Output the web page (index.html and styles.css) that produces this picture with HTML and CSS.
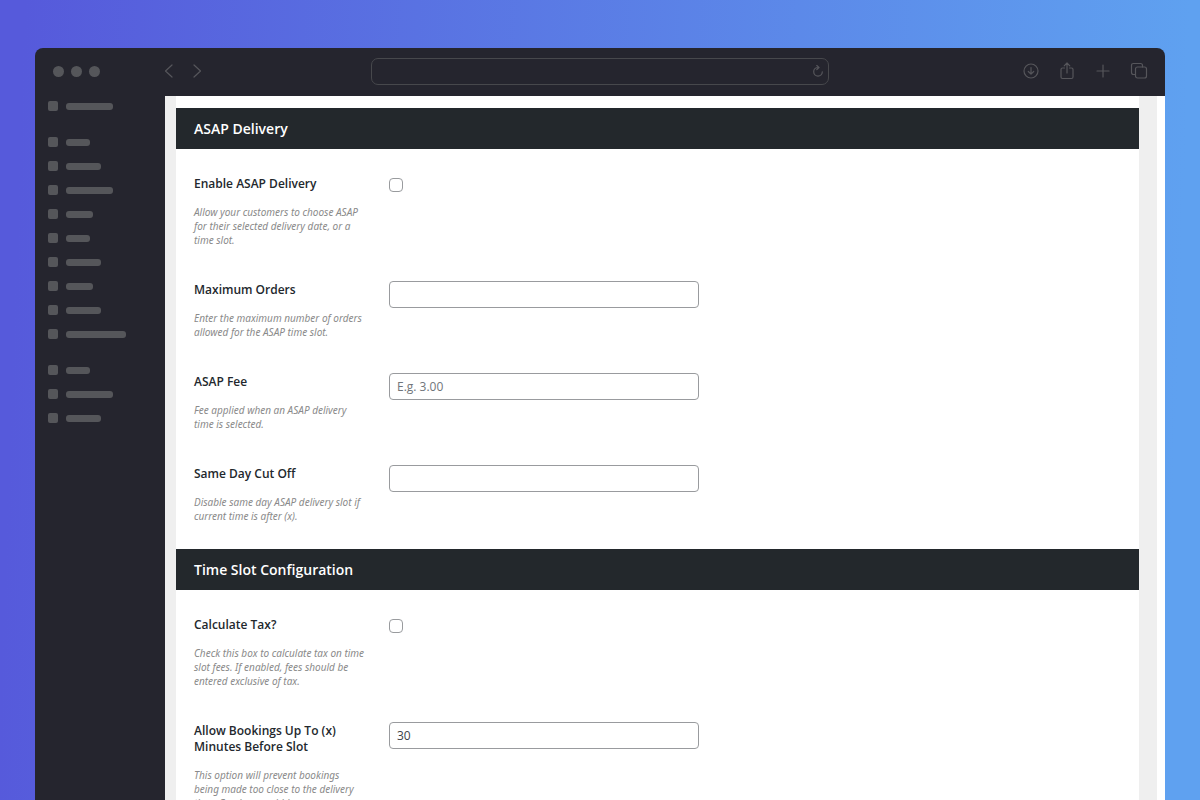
FILE: index.html
```html
<!DOCTYPE html>
<html lang="en">
<head>
<meta charset="UTF-8">
<meta name="viewport" content="width=device-width, initial-scale=1.0">
<title>Delivery Settings</title>
<link rel="stylesheet" href="styles.css">
</head>
<body>
  <div class="window">
    <header class="toolbar">
      <div class="toolbar-left">
        <div class="dots">
          <span></span>
          <span></span>
          <span></span>
        </div>
        <div class="nav-buttons">
          <button type="button" aria-label="Back">
            <svg width="10" height="14" viewBox="0 0 10 14"><path d="M8 1L1.500 7l6.500 6"/></svg>
          </button>
          <button type="button" aria-label="Forward">
            <svg width="10" height="14" viewBox="0 0 10 14"><path d="M2 1l6.500 6L2 13"/></svg>
          </button>
        </div>
      </div>
      <div class="address">
        <input type="text" aria-label="Address">
        <button type="button" aria-label="Reload">
          <svg width="12" height="12" viewBox="0 0 12 12"><path d="M6 2.500A4.300 4.300 0 1 0 10.300 6.800M4.800.500L7 2.500 4.800 4.700"/></svg>
        </button>
      </div>
      <div class="actions">
        <button type="button" aria-label="Downloads">
          <svg width="18" height="18" viewBox="0 0 18 18"><circle cx="9" cy="9" r="7"/><path d="M9 5.500v6.500M6.300 9.500L9 12.200l2.700-2.700"/></svg>
        </button>
        <button type="button" aria-label="Share">
          <svg width="18" height="18" viewBox="0 0 18 18"><path d="M6.500 6H4.500Q3 6 3 7.500v7.500q0 1.500 1.500 1.500h9q1.500 0 1.500-1.500V7.500Q15 6 13.500 6h-2M9 11V1.200M6.200 3.800L9 1l2.800 2.800"/></svg>
        </button>
        <button type="button" aria-label="New tab">
          <svg width="18" height="18" viewBox="0 0 18 18"><path d="M9 3v12M3 9h12"/></svg>
        </button>
        <button type="button" aria-label="Tabs">
          <svg width="18" height="18" viewBox="0 0 18 18"><rect x="5.500" y="5" width="11" height="11" rx="2"/><path d="M5 12.500H3.500q-2 0-2-2v-7q0-2 2-2h7q2 0 2 2V5"/></svg>
        </button>
      </div>
    </header>

    <div class="window-body">
      <aside class="sidebar">
        <ul>
          <li class="w-lg"></li>
        </ul>
        <ul>
          <li class="w-xs"></li>
          <li class="w-md"></li>
          <li class="w-lg"></li>
          <li class="w-sm"></li>
          <li class="w-xs"></li>
          <li class="w-md"></li>
          <li class="w-sm"></li>
          <li class="w-md"></li>
          <li class="w-xl"></li>
        </ul>
        <ul>
          <li class="w-xs"></li>
          <li class="w-lg"></li>
          <li class="w-md"></li>
        </ul>
      </aside>

      <main class="page">
        <form class="settings">
          <section>
            <h2>ASAP Delivery</h2>
            <div class="fields">
              <div class="row">
                <div class="info">
                  <label for="enable-asap">Enable ASAP Delivery</label>
                  <p>Allow your customers to choose ASAP for their selected delivery date, or a time slot.</p>
                </div>
                <div class="control"><input type="checkbox" id="enable-asap"></div>
              </div>
              <div class="row">
                <div class="info">
                  <label for="max-orders">Maximum Orders</label>
                  <p>Enter the maximum number of orders allowed for the ASAP time slot.</p>
                </div>
                <div class="control"><input type="text" id="max-orders"></div>
              </div>
              <div class="row">
                <div class="info">
                  <label for="asap-fee">ASAP Fee</label>
                  <p>Fee applied when an ASAP delivery time is selected.</p>
                </div>
                <div class="control"><input type="text" id="asap-fee" placeholder="E.g. 3.00"></div>
              </div>
              <div class="row">
                <div class="info">
                  <label for="cut-off">Same Day Cut Off</label>
                  <p>Disable same day ASAP delivery slot if current time is after (x).</p>
                </div>
                <div class="control"><input type="text" id="cut-off"></div>
              </div>
            </div>
          </section>

          <section>
            <h2>Time Slot Configuration</h2>
            <div class="fields">
              <div class="row">
                <div class="info">
                  <label for="calc-tax">Calculate Tax?</label>
                  <p>Check this box to calculate tax on time slot fees. If enabled, fees should be entered exclusive of tax.</p>
                </div>
                <div class="control"><input type="checkbox" id="calc-tax"></div>
              </div>
              <div class="row">
                <div class="info">
                  <label for="booking-limit">Allow Bookings Up To (x) Minutes Before Slot</label>
                  <p>This option will prevent bookings being made too close to the delivery time. Can be overridden.</p>
                </div>
                <div class="control"><input type="text" id="booking-limit" value="30"></div>
              </div>
            </div>
          </section>
        </form>
      </main>
    </div>
  </div>
</body>
</html>
```

FILE: styles.css
```css
* {
  box-sizing: border-box;
}
body {
  margin: 0;
  height: 100vh;
  padding: 48px 35px 0;
  overflow: hidden;
  font-family: "Open Sans", "Noto Sans", sans-serif;
  background: linear-gradient(92deg, #565adb 2%, #5fa1f0 97%);
}
button {
  display: flex;
  padding: 0;
  border: none;
  background: none;
  cursor: pointer;
}
svg {
  fill: none;
  stroke: #56565b;
  stroke-width: 1.2;
  stroke-linecap: round;
  stroke-linejoin: round;
}

/* browser window */
.window {
  display: flex;
  flex-direction: column;
  height: 100%;
  border-radius: 8px 8px 0 0;
  overflow: hidden;
  background-color: #25252e;
}
.toolbar {
  display: grid;
  grid-template-columns: 1fr minmax(200px, 458px) 1fr;
  align-items: center;
  height: 48px;
  flex-shrink: 0;
  padding: 0 17px 2px;
}
.toolbar-left {
  display: flex;
  align-items: center;
  gap: 64px;
}
.dots {
  display: flex;
  gap: 7px;
  padding-left: 1px;
}
.dots span {
  width: 11px;
  height: 11px;
  border-radius: 50%;
  background-color: #55565a;
}
.nav-buttons {
  display: flex;
  gap: 18px;
}
.address {
  display: flex;
  align-items: center;
  height: 27px;
  padding-right: 4px;
  border: 1px solid #47484c;
  border-radius: 7px;
}
.address input {
  flex-grow: 1;
  min-width: 0;
  border: none;
  outline: none;
  background: none;
  color: #9a9aa0;
}
.actions {
  display: flex;
  justify-content: flex-end;
  gap: 18px;
}
.window-body {
  display: flex;
  flex-grow: 1;
  min-height: 0;
}

/* sidebar placeholders */
.sidebar {
  width: 130px;
  flex-shrink: 0;
  padding-left: 13px;
}
.sidebar ul {
  display: flex;
  flex-direction: column;
  gap: 4px;
  list-style: none;
  margin: 0 0 16px;
  padding: 0;
}
.sidebar li {
  display: flex;
  align-items: center;
  gap: 8px;
  height: 20px;
}
.sidebar li::before {
  content: "";
  width: 10px;
  height: 10px;
  border-radius: 2px;
  background-color: #55565a;
}
.sidebar li::after {
  content: "";
  height: 7px;
  border-radius: 3px;
  background-color: #55565a;
}
.sidebar .w-xs::after { width: 24px; }
.sidebar .w-sm::after { width: 27px; }
.sidebar .w-md::after { width: 35px; }
.sidebar .w-lg::after { width: 47px; }
.sidebar .w-xl::after { width: 60px; }

/* settings page */
.page {
  flex-grow: 1;
  min-width: 0;
  overflow: hidden;
  padding: 0 18px 0 11px;
  border-right: 8px solid #fff;
  background-color: #efefef;
}
.settings {
  min-height: 100%;
  padding-top: 12px;
  background-color: #fff;
}
.settings h2 {
  margin: 0;
  padding: 0 18px;
  font-size: 14px;
  line-height: 41px;
  font-weight: 600;
  color: #fff;
  background-color: #23282c;
}
.fields {
  display: flex;
  flex-direction: column;
  gap: 34px;
  padding: 26px 18px;
}
.row {
  display: flex;
  gap: 23px;
}
.info {
  width: 172px;
  flex-shrink: 0;
  padding-top: 1px;
}
.info label {
  display: block;
  font-size: 12px;
  line-height: 16px;
  font-weight: 600;
  color: #23282d;
}
.info p {
  margin: 13px 0 0;
  font-family: "Noto Sans", sans-serif;
  font-size: 10px;
  line-height: 14px;
  font-style: italic;
  color: #8a8a8a;
}
.control {
  flex-grow: 1;
}
.control input[type="text"] {
  display: block;
  width: 100%;
  max-width: 310px;
  height: 27px;
  padding: 0 7px;
  border: 1px solid #999b9e;
  border-radius: 4px;
  font-family: inherit;
  font-size: 12px;
  color: #3c4248;
  background-color: #fff;
}
.control input::placeholder {
  color: #70757a;
}
.control input[type="checkbox"] {
  appearance: none;
  display: block;
  width: 14px;
  height: 14px;
  margin: 3px 0 0;
  border: 1px solid #999b9e;
  border-radius: 4px;
  background-color: #fff;
}
.control input[type="checkbox"]:checked {
  background-color: #3582c4;
}
```
